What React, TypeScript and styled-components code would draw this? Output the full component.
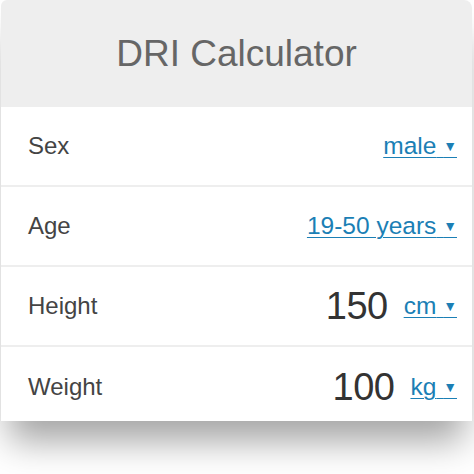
import React from "react";
import styled, { createGlobalStyle } from "styled-components";

const GlobalStyle = createGlobalStyle`
  html, body {
    margin: 0;
    padding: 0;
    background: #ffffff;
    font-family: "Liberation Sans", Arial, sans-serif;
  }
`;

const Page = styled.div`
  width: 474px;
  height: 474px;
  overflow: hidden;
  padding: 0 2px 0 1px;
  box-sizing: border-box;
`;

const Card = styled.div`
  background: #ffffff;
  border-radius: 6px 8px 0 0;
  overflow: hidden;
  box-shadow: 0 28px 34px -8px rgba(0, 0, 0, 0.36);
`;

const Header = styled.div`
  height: 107px;
  background: #eeeeee;
  display: flex;
  align-items: center;
  justify-content: center;
`;

const Title = styled.h1`
  margin: 0;
  font-size: 37px;
  font-weight: 400;
  color: #666666;
  padding-top: 1px;
`;

const Row = styled.div<{ $last?: boolean }>`
  height: ${(p) => (p.$last ? "74px" : "80px")};
  box-sizing: border-box;
  padding: ${(p) => (p.$last ? "6px 15px 0 27px" : "0 15px 0 27px")};
  display: flex;
  align-items: center;
  justify-content: space-between;
  border-bottom: ${(p) => (p.$last ? "none" : "2px solid #eeeeee")};
`;

const Label = styled.span`
  font-size: 24px;
  color: #444444;
`;

const Value = styled.div`
  display: flex;
  align-items: center;
  gap: 16px;
`;

const Number = styled.span`
  font-size: 38px;
  color: #333333;
  letter-spacing: -0.5px;
`;

const Select = styled.a`
  font-size: 24.5px;
  color: #1b7fb5;
  text-decoration: underline;
  text-underline-offset: 3px;
  text-decoration-thickness: 1px;
  cursor: pointer;
`;

const Caret = styled.span`
  font-size: 14px;
  vertical-align: 3px;
`;

const rows = [
  { label: "Sex", unit: "male" },
  { label: "Age", unit: "19-50 years" },
  { label: "Height", value: "150", unit: "cm" },
  { label: "Weight", value: "100", unit: "kg" },
];

function App() {
  return (
    <Page>
      <GlobalStyle />
      <Card>
        <Header>
          <Title>DRI Calculator</Title>
        </Header>
        {rows.map((r, i) => (
          <Row key={r.label} $last={i === rows.length - 1}>
            <Label>{r.label}</Label>
            <Value>
              {r.value && <Number>{r.value}</Number>}
              <Select>
                {r.unit} <Caret>▼</Caret>
              </Select>
            </Value>
          </Row>
        ))}
      </Card>
    </Page>
  );
}

export default App;
